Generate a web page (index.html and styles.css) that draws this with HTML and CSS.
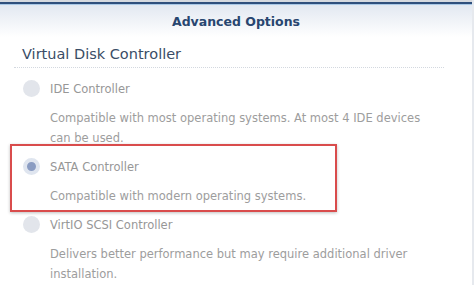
FILE: index.html
```html
<!DOCTYPE html>
<html lang="en">
    <head>
        <meta charset="UTF-8" />
        <title>Advanced Options</title>
        <link rel="stylesheet" href="styles.css">
    </head>
    <body>
        <div class="window">
            <div class="top-strip"></div>
            <div class="header">
                <h2>Advanced Options</h2>
            </div>
            <div class="content">
                <div class="section-title">Virtual Disk Controller</div>
                <div class="separator"></div>

                <div class="option first">
                    <div class="option-row">
                        <span class="radio"></span>
                        <label>IDE Controller</label>
                    </div>
                    <p class="desc">Compatible with most operating systems. At most 4 IDE devices can be used.</p>
                </div>

                <!-- red annotation box drawn around this one -->
                <div class="option highlight">
                    <div class="option-row">
                        <span class="radio checked"></span>
                        <label>SATA Controller</label>
                    </div>
                    <p class="desc">Compatible with modern operating systems.</p>
                </div>

                <div class="option">
                    <div class="option-row">
                        <span class="radio"></span>
                        <label>VirtIO SCSI Controller</label>
                    </div>
                    <p class="desc">Delivers better performance but may require additional driver installation.</p>
                </div>
            </div>
        </div>
    </body>
</html>
```

FILE: styles.css
```css
body {
    margin: 0;
    font-family: "DejaVu Sans", Verdana, sans-serif;
    background: #ffffff;
}

.window {
    width: 472px;
    height: 285px;
    border-right: 2px solid #e6e9ee;
    overflow: hidden;
}

.top-strip {
    height: 2px;
    background: #d5d9df;
    border-bottom: 2px solid #2f4f7c;
    box-shadow: 0 1px 0 #a9c8e6;
}

.header {
    height: 32px;
    margin-top: 1px;
    display: flex;
    align-items: center;
    justify-content: center;
    background: linear-gradient(#e2e8f1, #ffffff);
}

h2 {
    margin: 2px 0 0;
    font-size: 12.5px;
    line-height: 16px;
    font-weight: bold;
    color: #284670;
}

.content {
    padding: 9px 0 0 14px;
}

.section-title {
    padding-left: 8px;
    font-size: 14.5px;
    line-height: 17px;
    color: #3a4d66;
}

.separator {
    width: 430px;
    margin-top: 4px;
    border-bottom: 1px dotted #d3d8df;
}

.option {
    position: relative;
    padding: 11px 0 0 9px;
}

.option.first {
    padding-top: 13px;
}

.option-row {
    display: flex;
    align-items: center;
    gap: 10px;
    height: 16px;
}

.radio {
    width: 17px;
    height: 17px;
    margin-top: -2px;
    border-radius: 50%;
    background: #e2e5eb;
    box-sizing: border-box;
}

.radio.checked {
    background: #8a9cc2;
    border: 4px solid #dfe5ef;
}

label {
    font-size: 11.5px;
    color: #979797;
}

.desc {
    margin: 11px 0 0 27px;
    width: 390px;
    font-size: 11.5px;
    line-height: 20px;
    color: #9d9d9d;
}

.highlight::after {
    content: "";
    position: absolute;
    top: -4px;
    left: -4px;
    width: 327px;
    height: 68px;
    box-sizing: border-box;
    border: 2px solid #d94c4c;
    box-shadow: 0 1px 3px rgba(0, 0, 0, 0.25);
}
```
